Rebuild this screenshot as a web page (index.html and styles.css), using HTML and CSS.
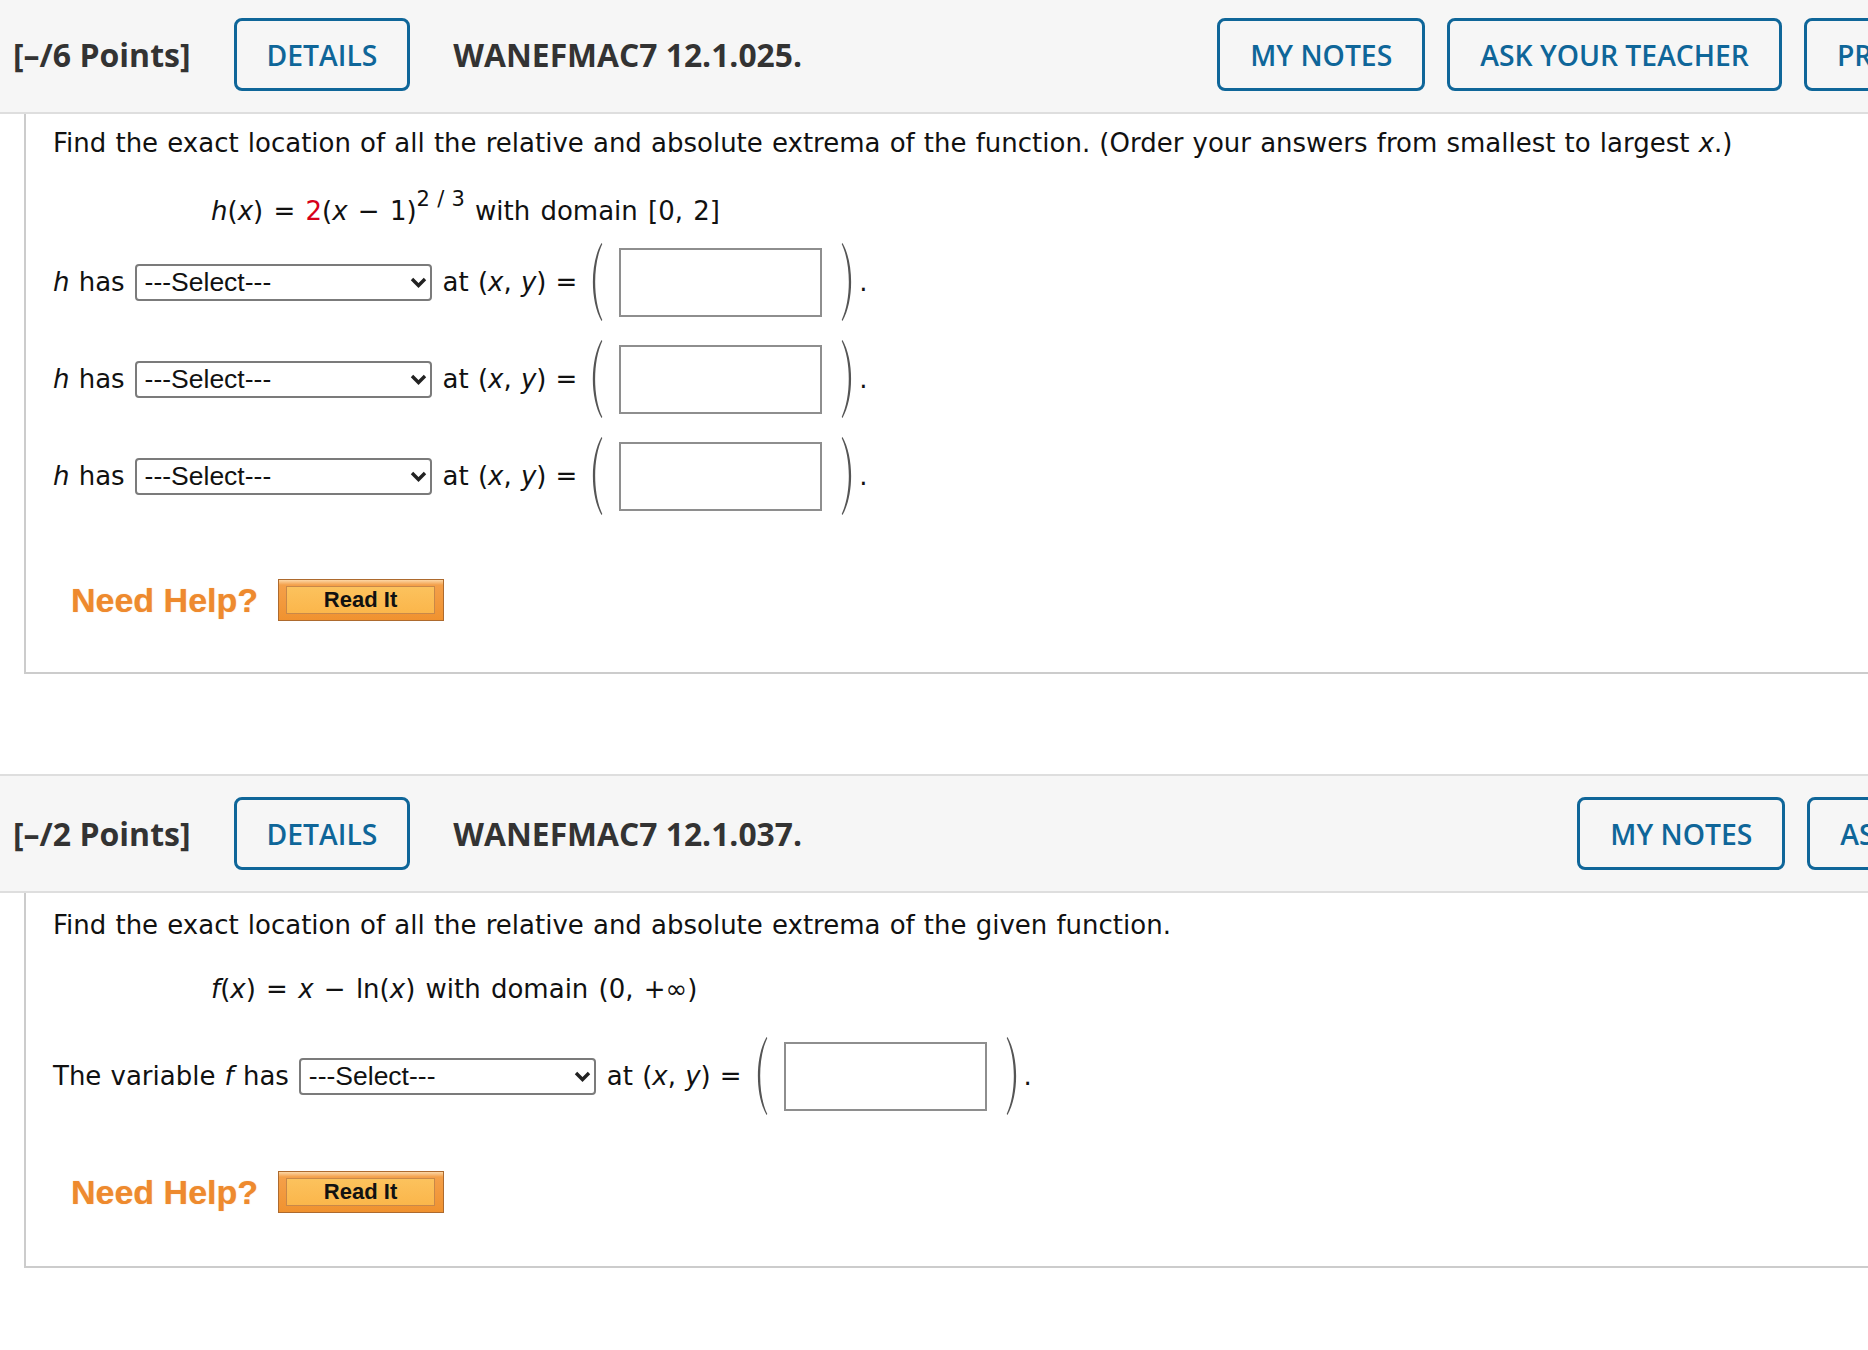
FILE: index.html
```html
<!DOCTYPE html>
<html lang="en">
<head>
<meta charset="utf-8">
<title>WebAssign</title>
<link rel="stylesheet" href="styles.css">
</head>
<body>
<div class="page">

  <section class="question">
    <header class="q-head">
      <div class="q-left">
        <span class="points">[–/6 Points]</span>
        <button class="btn">DETAILS</button>
        <span class="q-title">WANEFMAC7 12.1.025.</span>
      </div>
      <div class="q-right">
        <button class="btn">MY NOTES</button>
        <button class="btn">ASK YOUR TEACHER</button>
        <button class="btn">PRACTICE ANOTHER</button>
      </div>
    </header>
    <div class="q-body">
      <p class="prompt">Find the exact location of all the relative and absolute extrema of the function. (Order your answers from smallest to largest <i>x</i>.)</p>
      <p class="equation equation--sup"><i>h</i>(<i>x</i>) = <span class="red">2</span>(<i>x</i> − 1)<sup class="sup">2 / 3</sup> with domain [0, 2]</p>
      <div class="answers">
        <div class="answer-row">
          <span><i>h</i> has</span>
          <span class="select"><select><option>---Select---</option></select><svg class="chev" width="17" height="11" viewBox="0 0 17 11"><path d="M2 2 L8.5 8.5 L15 2" fill="none" stroke="#222" stroke-width="3.4"/></svg></span>
          <span>at (<i>x</i>, <i>y</i>) =</span>
          <svg class="paren paren-l" width="14" height="78" viewBox="0 0 14 78"><path d="M12.5 0 C1 20 1 58 12.5 78 L13.3 77 C3.8 57 3.8 21 13.3 1 Z" fill="#555"/></svg>
          <input class="answer-box" type="text">
          <svg class="paren paren-r" width="14" height="78" viewBox="0 0 14 78"><path d="M1.5 0 C13 20 13 58 1.5 78 L0.7 77 C10.2 57 10.2 21 0.7 1 Z" fill="#555"/></svg>
          <span>.</span>
        </div>
        <div class="answer-row">
          <span><i>h</i> has</span>
          <span class="select"><select><option>---Select---</option></select><svg class="chev" width="17" height="11" viewBox="0 0 17 11"><path d="M2 2 L8.5 8.5 L15 2" fill="none" stroke="#222" stroke-width="3.4"/></svg></span>
          <span>at (<i>x</i>, <i>y</i>) =</span>
          <svg class="paren paren-l" width="14" height="78" viewBox="0 0 14 78"><path d="M12.5 0 C1 20 1 58 12.5 78 L13.3 77 C3.8 57 3.8 21 13.3 1 Z" fill="#555"/></svg>
          <input class="answer-box" type="text">
          <svg class="paren paren-r" width="14" height="78" viewBox="0 0 14 78"><path d="M1.5 0 C13 20 13 58 1.5 78 L0.7 77 C10.2 57 10.2 21 0.7 1 Z" fill="#555"/></svg>
          <span>.</span>
        </div>
        <div class="answer-row">
          <span><i>h</i> has</span>
          <span class="select"><select><option>---Select---</option></select><svg class="chev" width="17" height="11" viewBox="0 0 17 11"><path d="M2 2 L8.5 8.5 L15 2" fill="none" stroke="#222" stroke-width="3.4"/></svg></span>
          <span>at (<i>x</i>, <i>y</i>) =</span>
          <svg class="paren paren-l" width="14" height="78" viewBox="0 0 14 78"><path d="M12.5 0 C1 20 1 58 12.5 78 L13.3 77 C3.8 57 3.8 21 13.3 1 Z" fill="#555"/></svg>
          <input class="answer-box" type="text">
          <svg class="paren paren-r" width="14" height="78" viewBox="0 0 14 78"><path d="M1.5 0 C13 20 13 58 1.5 78 L0.7 77 C10.2 57 10.2 21 0.7 1 Z" fill="#555"/></svg>
          <span>.</span>
        </div>
      </div>
      <div class="help">
        <span class="need-help">Need Help?</span>
        <span class="read-it"><span class="read-it-inner">Read It</span></span>
      </div>
    </div>
  </section>

  <section class="question">
    <header class="q-head">
      <div class="q-left">
        <span class="points">[–/2 Points]</span>
        <button class="btn">DETAILS</button>
        <span class="q-title">WANEFMAC7 12.1.037.</span>
      </div>
      <div class="q-right">
        <button class="btn">MY NOTES</button>
        <button class="btn">ASK YOUR TEACHER</button>
      </div>
    </header>
    <div class="q-body q-body--short">
      <p class="prompt">Find the exact location of all the relative and absolute extrema of the given function.</p>
      <p class="equation"><i>f</i>(<i>x</i>) = <i>x</i> − ln(<i>x</i>) with domain (0, +∞)</p>
      <div class="answers answers--loose">
        <div class="answer-row">
          <span>The variable <i>f</i> has</span>
          <span class="select"><select><option>---Select---</option></select><svg class="chev" width="17" height="11" viewBox="0 0 17 11"><path d="M2 2 L8.5 8.5 L15 2" fill="none" stroke="#222" stroke-width="3.4"/></svg></span>
          <span>at (<i>x</i>, <i>y</i>) =</span>
          <svg class="paren paren-l" width="14" height="78" viewBox="0 0 14 78"><path d="M12.5 0 C1 20 1 58 12.5 78 L13.3 77 C3.8 57 3.8 21 13.3 1 Z" fill="#555"/></svg>
          <input class="answer-box" type="text">
          <svg class="paren paren-r" width="14" height="78" viewBox="0 0 14 78"><path d="M1.5 0 C13 20 13 58 1.5 78 L0.7 77 C10.2 57 10.2 21 0.7 1 Z" fill="#555"/></svg>
          <span>.</span>
        </div>
      </div>
      <div class="help help--tight">
        <span class="need-help">Need Help?</span>
        <span class="read-it"><span class="read-it-inner">Read It</span></span>
      </div>
    </div>
  </section>

</div>
</body>
</html>
```

FILE: styles.css
```css
html, body {
  margin: 0;
  padding: 0;
  overflow: hidden;
  background: #fff;
}

body {
  font-family: "DejaVu Sans", Verdana, sans-serif;
  font-size: 26px;
  word-spacing: 0.9px;
  color: #111;
}

.page {
  width: 2160px;
  margin-top: -5px;
}

.question + .question {
  margin-top: 100px;
}

/* header bar */
.q-head {
  display: flex;
  justify-content: space-between;
  align-items: center;
  background: #f6f6f6;
  border-top: 2px solid #dedede;
  border-bottom: 2px solid #dedede;
  padding: 21px 18px 21px 13px;
  font-family: "Open Sans", "Liberation Sans", sans-serif;
  word-spacing: 0;
}

.q-left,
.q-right {
  display: flex;
  align-items: center;
}

.q-left {
  gap: 43px;
}

.q-right {
  gap: 22px;
}

.points,
.q-title {
  font-size: 32px;
  font-weight: 700;
  color: #333;
}

.q-title {
  font-size: 31.8px;
}

.btn {
  height: 73px;
  box-sizing: border-box;
  padding: 0 30px;
  background: transparent;
  border: 3.5px solid #0f6699;
  border-radius: 8px;
  font-family: "Open Sans", "Liberation Sans", sans-serif;
  font-size: 28.3px;
  font-weight: 600;
  color: #0f6699;
}

/* question body */
.q-body {
  margin-left: 24px;
  border-left: 2px solid #cccccc;
  border-bottom: 2px solid #cccccc;
  padding: 13px 0 51px 27px;
}

.q-body--short {
  padding-top: 16px;
  padding-bottom: 53px;
}

.prompt,
.equation {
  margin: 0;
  line-height: 32px;
  white-space: nowrap;
}

.equation {
  margin: 32px 0 0 158px;
  word-spacing: 2px;
}

.equation--sup {
  margin-top: 36px;
}

.red {
  color: #d7001a;
}

.sup {
  font-size: 21px;
  line-height: 0;
  vertical-align: 14px;
  word-spacing: 0.5px;
}

.answers {
  display: flex;
  flex-direction: column;
  gap: 19px;
  margin-top: 16px;
}

.answers--loose {
  margin-top: 32px;
}

.answer-row {
  display: flex;
  align-items: center;
  height: 78px;
  line-height: 32px;
  white-space: nowrap;
}

.select {
  position: relative;
  display: inline-flex;
  margin: 0 11px 0 10px;
}

.select select {
  appearance: none;
  -webkit-appearance: none;
  width: 297px;
  height: 37px;
  box-sizing: border-box;
  border: 2px solid #7b7b7b;
  border-radius: 4px;
  background: #fff;
  padding: 0 0 0 8px;
  font-family: "Liberation Sans", Arial, sans-serif;
  font-size: 26.5px;
  color: #111;
}

.chev {
  position: absolute;
  right: 5px;
  top: 13px;
  pointer-events: none;
}

.paren-l {
  margin: 0 16px 0 12px;
}

.paren-r {
  margin: 0 4px 0 19px;
}

.answer-box {
  width: 203px;
  height: 69px;
  box-sizing: border-box;
  border: 2px solid #8e8e8e;
  border-radius: 0;
  padding: 0;
  margin: 0;
  background: #fff;
}

/* help */
.help {
  display: flex;
  align-items: center;
  gap: 20px;
  margin: 64px 0 0 18px;
  height: 42px;
  word-spacing: 0;
}

.help--tight {
  margin-top: 56px;
}

.need-help {
  font-family: "Liberation Sans", Arial, sans-serif;
  font-size: 34px;
  font-weight: 700;
  color: #ee8a2e;
  text-shadow: 0 0 1px rgba(238, 138, 46, 0.6);
}

.read-it {
  display: flex;
  width: 166px;
  height: 42px;
  box-sizing: border-box;
  border: 1px solid #ad6a2e;
  padding: 6px 8px 6px 7px;
  background: linear-gradient(#fcd7a6 0, #f4a04a 5px, #f0922f 100%);
}

.read-it-inner {
  flex: 1;
  border: 1px solid #c98848;
  background: linear-gradient(#fcc25d, #fbb64b);
  font-family: "Liberation Sans", Arial, sans-serif;
  font-size: 22px;
  font-weight: 700;
  line-height: 26px;
  text-align: center;
  color: #111;
}
```
